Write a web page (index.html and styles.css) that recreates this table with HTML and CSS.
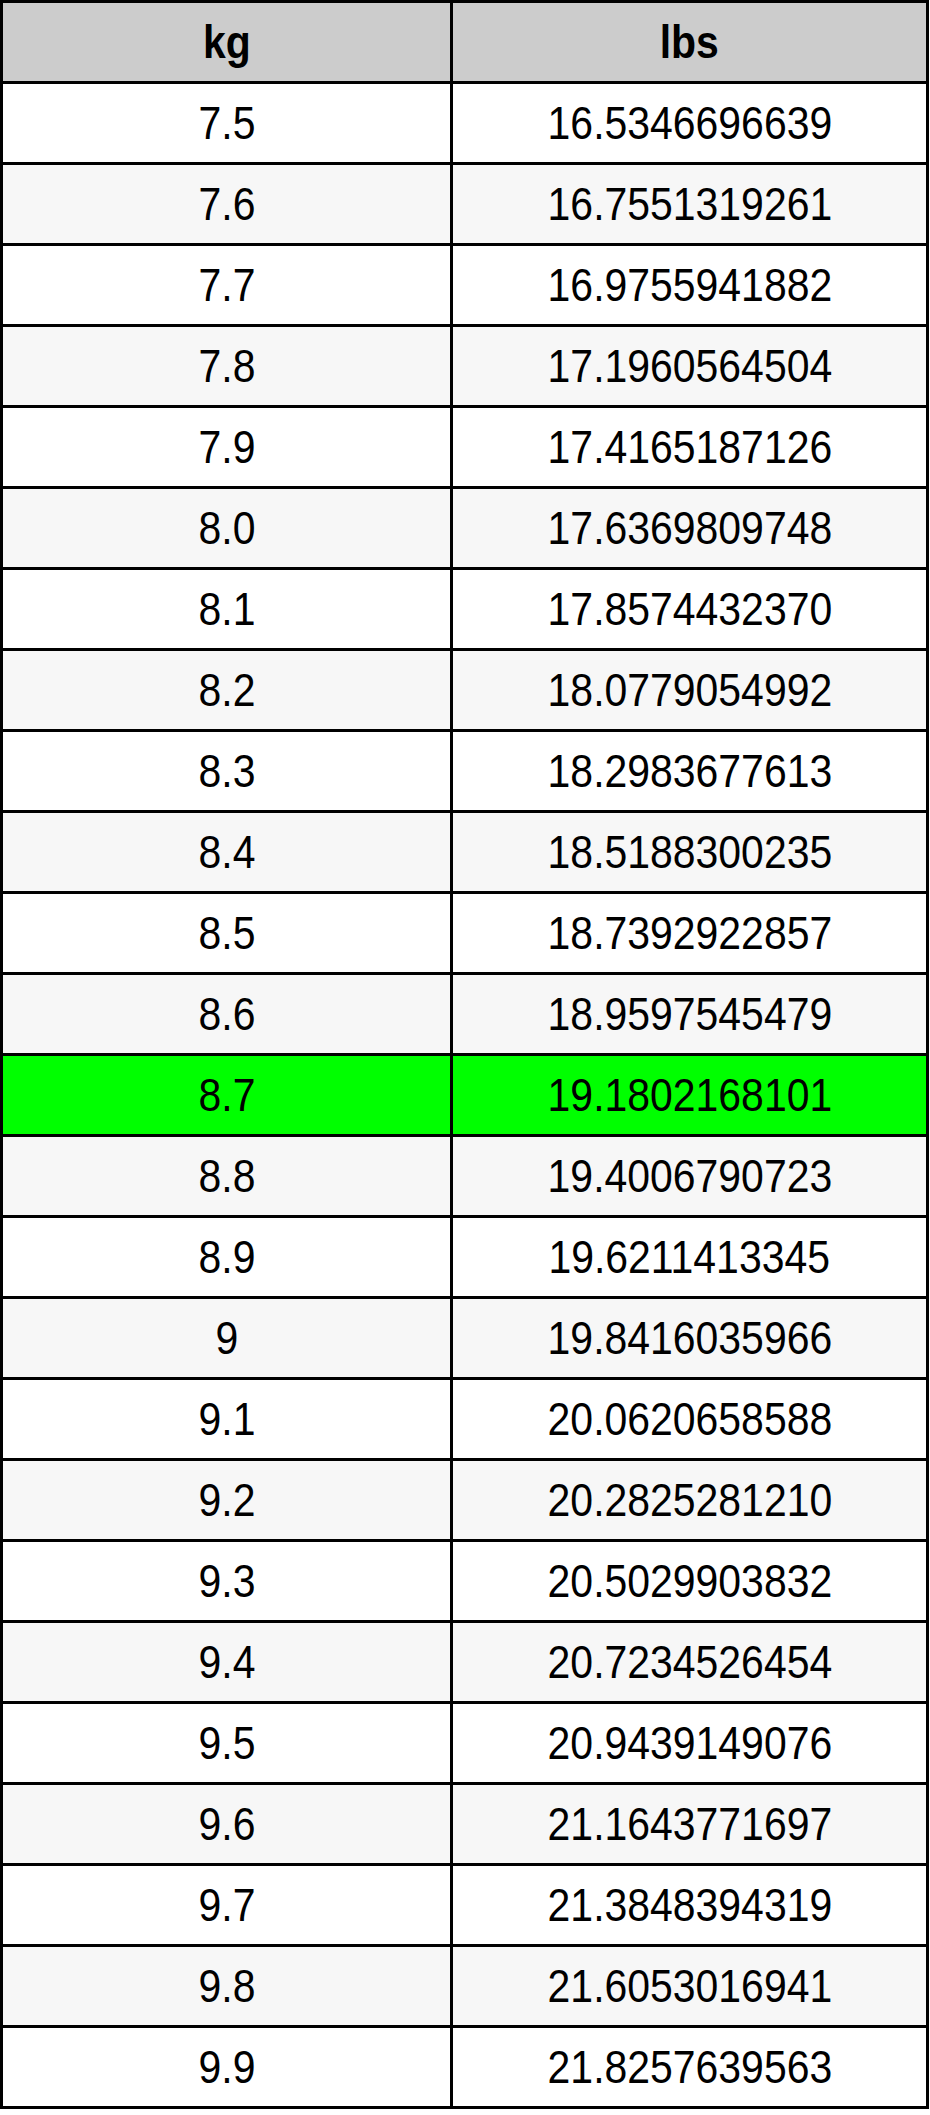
FILE: index.html
```html
<!DOCTYPE html>
<html>
<head>
<meta charset="utf-8">
<title>kg to lbs</title>
<link rel="stylesheet" href="styles.css">
</head>
<body>
<table class="conv">
  <colgroup><col class="c-kg"><col class="c-lbs"></colgroup>
  <thead>
    <tr><th><span class="t">kg</span></th><th><span class="t">lbs</span></th></tr>
  </thead>
  <tbody>
    <tr><td><span class="t">7.5</span></td><td><span class="t">16.5346696639</span></td></tr>
    <tr><td><span class="t">7.6</span></td><td><span class="t">16.7551319261</span></td></tr>
    <tr><td><span class="t">7.7</span></td><td><span class="t">16.9755941882</span></td></tr>
    <tr><td><span class="t">7.8</span></td><td><span class="t">17.1960564504</span></td></tr>
    <tr><td><span class="t">7.9</span></td><td><span class="t">17.4165187126</span></td></tr>
    <tr><td><span class="t">8.0</span></td><td><span class="t">17.6369809748</span></td></tr>
    <tr><td><span class="t">8.1</span></td><td><span class="t">17.8574432370</span></td></tr>
    <tr><td><span class="t">8.2</span></td><td><span class="t">18.0779054992</span></td></tr>
    <tr><td><span class="t">8.3</span></td><td><span class="t">18.2983677613</span></td></tr>
    <tr><td><span class="t">8.4</span></td><td><span class="t">18.5188300235</span></td></tr>
    <tr><td><span class="t">8.5</span></td><td><span class="t">18.7392922857</span></td></tr>
    <tr><td><span class="t">8.6</span></td><td><span class="t">18.9597545479</span></td></tr>
    <tr class="hl"><td><span class="t">8.7</span></td><td><span class="t">19.1802168101</span></td></tr>
    <tr><td><span class="t">8.8</span></td><td><span class="t">19.4006790723</span></td></tr>
    <tr><td><span class="t">8.9</span></td><td><span class="t">19.6211413345</span></td></tr>
    <tr><td><span class="t">9</span></td><td><span class="t">19.8416035966</span></td></tr>
    <tr><td><span class="t">9.1</span></td><td><span class="t">20.0620658588</span></td></tr>
    <tr><td><span class="t">9.2</span></td><td><span class="t">20.2825281210</span></td></tr>
    <tr><td><span class="t">9.3</span></td><td><span class="t">20.5029903832</span></td></tr>
    <tr><td><span class="t">9.4</span></td><td><span class="t">20.7234526454</span></td></tr>
    <tr><td><span class="t">9.5</span></td><td><span class="t">20.9439149076</span></td></tr>
    <tr><td><span class="t">9.6</span></td><td><span class="t">21.1643771697</span></td></tr>
    <tr><td><span class="t">9.7</span></td><td><span class="t">21.3848394319</span></td></tr>
    <tr><td><span class="t">9.8</span></td><td><span class="t">21.6053016941</span></td></tr>
    <tr><td><span class="t">9.9</span></td><td><span class="t">21.8257639563</span></td></tr>
  </tbody>
</table>
</body>
</html>
```

FILE: styles.css
```css
html, body {
  margin: 0;
  padding: 0;
  background: #ffffff;
}

.conv {
  width: 929px;
  table-layout: fixed;
  border-collapse: separate;
  border-spacing: 0;
  border-top: 3px solid #000;
  border-left: 3px solid #000;
  font-family: "Liberation Sans", Arial, sans-serif;
  font-size: 46px;
  color: #000;
}

.c-kg { width: 450px; }
.c-lbs { width: 476px; }

.conv th,
.conv td {
  padding: 0;
  height: 78px;
  line-height: 78px;
  text-align: center;
  border-right: 3px solid #000;
  border-bottom: 3px solid #000;
  white-space: nowrap;
  overflow: hidden;
}

.conv th {
  background: #cccccc;
  font-weight: bold;
}

.conv tbody tr:nth-child(odd) td { background: #ffffff; }
.conv tbody tr:nth-child(even) td { background: #f7f7f7; }
.conv tbody tr.hl td { background: #00ff00; }

.t {
  display: inline-block;
  transform: scaleX(0.89);
}
```
